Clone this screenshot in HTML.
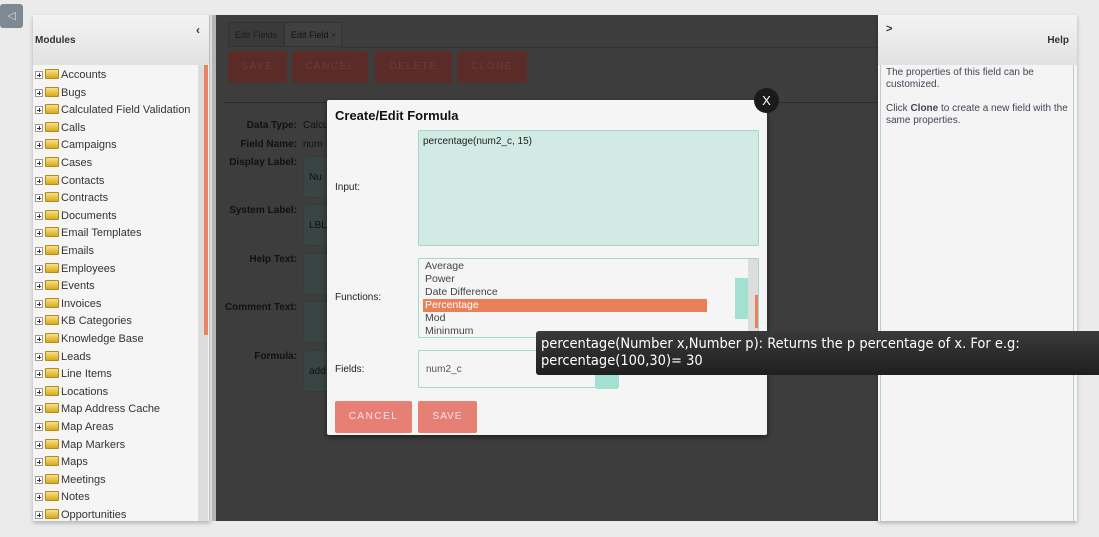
<!DOCTYPE html>
<html><head><style>
*{box-sizing:border-box;margin:0;padding:0}
body{width:1099px;height:537px;background:#ebebeb;font-family:"Liberation Sans","DejaVu Sans",sans-serif;position:relative;overflow:hidden;font-size:11px;color:#333}
.abs{position:absolute}
.tog{left:0;top:4px;width:23px;height:24px;background:#7d8a94;border-radius:3px;color:#dde;font-size:11px;text-align:center;line-height:24px}
.lp{left:33px;top:15px;width:177px;height:506px;background:#f5f5f5;box-shadow:0 2px 4px rgba(0,0,0,.25)}
.hd{left:0;top:0;width:100%;height:50px;background:linear-gradient(#f3f3f3,#e2e2e2)}
.item{position:absolute;left:2px;height:16px;font-size:11px;color:#333;white-space:nowrap;line-height:16px}
.pl{display:inline-block;width:8px;height:8px;border:1px solid #999;background:#fff;vertical-align:-1px;position:relative;margin-right:2px}
.pl:before{content:"";position:absolute;left:1px;top:3px;width:4px;height:1px;background:#333}
.pl:after{content:"";position:absolute;left:3px;top:1px;width:1px;height:4px;background:#333}
.fd{display:inline-block;width:14px;height:10px;background:linear-gradient(#f7e08a,#d9a91a);border:1px solid #b68a17;border-radius:1px;vertical-align:-1px;margin-right:2px}
.dk{left:216px;top:15px;width:662px;height:506px;background:#3d3d3d}
.btn{position:absolute;top:36px;height:32px;background:#5b2b27;border-radius:3px;color:#6e3b36;font-size:10px;letter-spacing:1.5px;text-align:center;line-height:32px}
.lbl{position:absolute;right:581px;font-weight:bold;font-size:10px;color:#111;text-align:right}
.box{position:absolute;left:87px;width:30px;background:#394542;border:1px solid #333d3b;border-radius:3px;color:#111;font-size:10px}
.rp{left:878px;top:15px;width:199px;height:506px;background:#f5f5f5;box-shadow:0 2px 4px rgba(0,0,0,.25)}
.md{left:327px;top:100px;width:440px;height:335px;background:#f5f5f5;box-shadow:0 2px 6px rgba(0,0,0,.5);border-radius:2px}
.ml{position:absolute;left:8px;font-size:10px;color:#222}
</style></head><body>
<div class="abs tog">&#9665;</div>
<div class="abs lp">
 <div class="abs hd"><div class="abs" style="left:2px;top:20px;font-weight:bold;font-size:10px;color:#333">Modules</div><div class="abs" style="right:10px;top:8px;font-size:12px;font-weight:bold">&lsaquo;</div></div>
 <div class="abs" style="left:165px;top:50px;width:10px;height:456px;background:#ddd"></div>
 <div class="abs" style="left:171px;top:50px;width:4px;height:270px;background:#e8845f"></div>
 <div class="abs" style="left:176px;top:0;width:1px;height:506px;background:#bbb"></div>
 <div class="abs" style="left:0;top:50px;width:165px;height:456px;">
 <div class="item" style="top:2px"><span class="pl"></span><span class="fd"></span>Accounts</div>
 <div class="item" style="top:20px"><span class="pl"></span><span class="fd"></span>Bugs</div>
 <div class="item" style="top:37px"><span class="pl"></span><span class="fd"></span>Calculated Field Validation</div>
 <div class="item" style="top:55px"><span class="pl"></span><span class="fd"></span>Calls</div>
 <div class="item" style="top:72px"><span class="pl"></span><span class="fd"></span>Campaigns</div>
 <div class="item" style="top:90px"><span class="pl"></span><span class="fd"></span>Cases</div>
 <div class="item" style="top:108px"><span class="pl"></span><span class="fd"></span>Contacts</div>
 <div class="item" style="top:125px"><span class="pl"></span><span class="fd"></span>Contracts</div>
 <div class="item" style="top:143px"><span class="pl"></span><span class="fd"></span>Documents</div>
 <div class="item" style="top:160px"><span class="pl"></span><span class="fd"></span>Email Templates</div>
 <div class="item" style="top:178px"><span class="pl"></span><span class="fd"></span>Emails</div>
 <div class="item" style="top:196px"><span class="pl"></span><span class="fd"></span>Employees</div>
 <div class="item" style="top:213px"><span class="pl"></span><span class="fd"></span>Events</div>
 <div class="item" style="top:231px"><span class="pl"></span><span class="fd"></span>Invoices</div>
 <div class="item" style="top:248px"><span class="pl"></span><span class="fd"></span>KB Categories</div>
 <div class="item" style="top:266px"><span class="pl"></span><span class="fd"></span>Knowledge Base</div>
 <div class="item" style="top:284px"><span class="pl"></span><span class="fd"></span>Leads</div>
 <div class="item" style="top:301px"><span class="pl"></span><span class="fd"></span>Line Items</div>
 <div class="item" style="top:319px"><span class="pl"></span><span class="fd"></span>Locations</div>
 <div class="item" style="top:336px"><span class="pl"></span><span class="fd"></span>Map Address Cache</div>
 <div class="item" style="top:354px"><span class="pl"></span><span class="fd"></span>Map Areas</div>
 <div class="item" style="top:372px"><span class="pl"></span><span class="fd"></span>Map Markers</div>
 <div class="item" style="top:389px"><span class="pl"></span><span class="fd"></span>Maps</div>
 <div class="item" style="top:407px"><span class="pl"></span><span class="fd"></span>Meetings</div>
 <div class="item" style="top:424px"><span class="pl"></span><span class="fd"></span>Notes</div>
 <div class="item" style="top:442px"><span class="pl"></span><span class="fd"></span>Opportunities</div>
 </div>
</div>
<div class="abs" style="left:210px;top:15px;width:6px;height:506px;background:#b5b5b5;border-left:2px solid #ddd"></div>
<div class="abs dk">
 <div class="abs" style="left:12px;top:7px;width:56px;height:25px;border:1px solid #333;background:#3a3a3a;color:#1d1d1d;font-size:9px;line-height:25px;text-align:center">Edit Fields</div>
 <div class="abs" style="left:68px;top:7px;width:58px;height:25px;border:1px solid #333;background:#404040;color:#111;font-size:9px;line-height:25px;padding-left:6px">Edit Field <span style="color:#222">&times;</span></div>
 <div class="abs" style="left:126px;top:32px;width:536px;height:1px;background:#333"></div>
 <div class="btn" style="left:12px;width:59px">SAVE</div>
 <div class="btn" style="left:76px;width:76px">CANCEL</div>
 <div class="btn" style="left:159px;width:77px">DELETE</div>
 <div class="btn" style="left:241px;width:70px">CLONE</div>
 <div class="abs" style="left:8px;top:87px;width:654px;height:1px;background:#2d2d2d"></div>
 <div class="lbl" style="top:105px">Data Type:</div><div class="abs" style="left:87px;top:105px;font-size:10px;color:#111">Calcu</div>
 <div class="lbl" style="top:124px">Field Name:</div><div class="abs" style="left:87px;top:124px;font-size:10px;color:#111">num</div>
 <div class="lbl" style="top:142px">Display Label:</div><div class="box" style="top:141px;height:42px;padding:15px 5px">Nu</div>
 <div class="lbl" style="top:190px">System Label:</div><div class="box" style="top:189px;height:42px;padding:15px 5px">LBL</div>
 <div class="lbl" style="top:239px">Help Text:</div><div class="box" style="top:238px;height:42px"></div>
 <div class="lbl" style="top:287px">Comment Text:</div><div class="box" style="top:286px;height:42px"></div>
 <div class="lbl" style="top:336px">Formula:</div><div class="box" style="top:335px;height:42px;padding:15px 5px">add</div>
</div>
<div class="abs rp">
 <div class="abs" style="left:0;top:0;width:199px;height:50px;background:linear-gradient(#f3f3f3,#e2e2e2)"><div class="abs" style="left:8px;top:8px;font-size:11px;font-weight:bold">&gt;</div><div class="abs" style="right:8px;top:20px;font-size:10px;font-weight:bold">Help</div></div>
 <div class="abs" style="left:2px;top:50px;width:194px;height:456px;border-left:1px solid #bcc;border-right:1px solid #bcc;background:#f4f4f4;padding:2px 5px;font-size:10px;color:#445;line-height:12px">The properties of this field can be customized.<br><br>Click <b>Clone</b> to create a new field with the same properties.</div>
</div>
<div class="abs md">
 <div class="abs" style="left:8px;top:8px;font-size:13px;font-weight:bold;color:#111">Create/Edit Formula</div>
 <div class="ml" style="top:82px">Input:</div>
 <div class="abs" style="left:91px;top:30px;width:341px;height:116px;background:#d1ebe4;border:1px solid #9fd9c8;border-radius:2px;padding:5px 4px;font-size:10px;color:#222">percentage(num2_c, 15)</div>
 <div class="ml" style="top:192px">Functions:</div>
 <div class="abs" style="left:91px;top:158px;width:341px;height:80px;background:#f5f5f5;border:1px solid #9fd9c8;border-radius:2px;overflow:hidden;font-size:10.5px;color:#444;line-height:13px">
  <div style="padding-left:6px;margin-top:1px">Average</div><div style="padding-left:6px">Power</div><div style="padding-left:6px">Date Difference</div>
  <div style="margin-left:4px;width:284px;padding-left:2px;background:#e8805a;color:#fff">Percentage</div>
  <div style="padding-left:6px">Mod</div><div style="padding-left:6px">Mininmum</div>
  <div class="abs" style="left:316px;top:19px;width:14px;height:41px;background:#a2e0d1"></div>
  <div class="abs" style="left:329px;top:0;width:11px;height:80px;background:#ddd"></div>
  <div class="abs" style="left:336px;top:36px;width:3px;height:33px;background:#e8805a"></div>
 </div>
 <div class="ml" style="top:264px">Fields:</div>
 <div class="abs" style="left:91px;top:250px;width:200px;height:38px;background:#f5f5f5;border:1px solid #9fd9c8;border-radius:2px;padding:13px 7px;font-size:10px;color:#555">num2_c</div>
 <div class="abs" style="left:268px;top:270px;width:24px;height:19px;background:#a2e0d1;border-radius:0 0 3px 3px"></div>
 <div class="abs" style="left:8px;top:301px;width:77px;height:32px;background:#e68075;border-radius:2px;color:#fde;font-size:10px;letter-spacing:1.5px;text-align:center;line-height:32px">CANCEL</div>
 <div class="abs" style="left:91px;top:301px;width:59px;height:32px;background:#e68075;border-radius:2px;color:#fde;font-size:10px;letter-spacing:1px;text-align:center;line-height:32px">SAVE</div>
</div>
<div class="abs" style="left:754px;top:88px;width:25px;height:25px;border-radius:50%;background:#1a1a1a;color:#fff;font-size:13px;text-align:center;line-height:25px">X</div>
<div class="abs" style="left:536px;top:331px;width:570px;height:44px;background:linear-gradient(#3a3a3a,#1f1f1f);border-radius:3px;color:#fff;font-size:14.5px;line-height:17px;padding:5px 5px;font-family:'DejaVu Sans Condensed','Liberation Sans',sans-serif">percentage(Number x,Number p): Returns the p percentage of x. For e.g:<br>percentage(100,30)= 30</div>
</body></html>
